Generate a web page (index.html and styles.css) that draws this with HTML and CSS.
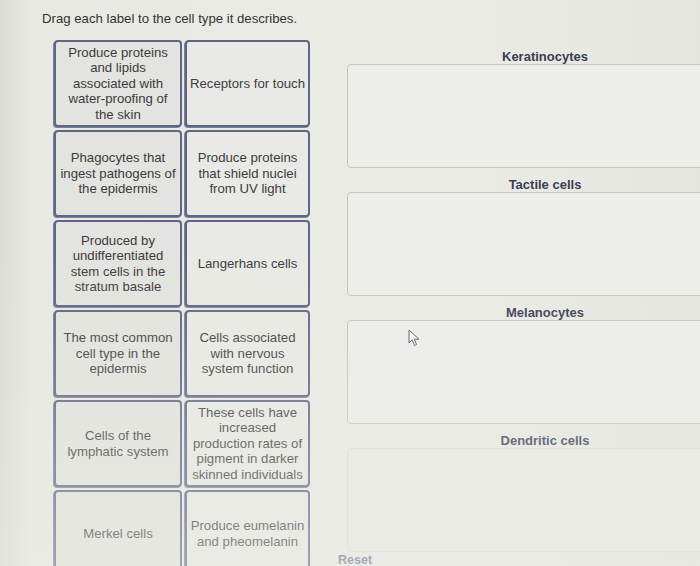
FILE: index.html
```html
<!DOCTYPE html>
<html lang="en">
<head>
  <meta charset="UTF-8">
  <meta name="viewport" content="width=device-width, initial-scale=1.0">
  <title>Cell Types - Labeling</title>
  <link rel="stylesheet" href="styles.css">
</head>
<body>
  <div class="page">
    <p class="prompt">Drag each label to the cell type it describes.</p>

    <div class="activity">
      <div class="label-bank">
        <div class="tile">Produce proteins and lipids associated with water-proofing of the skin</div>
        <div class="tile">Receptors for touch</div>
        <div class="tile">Phagocytes that ingest pathogens of the epidermis</div>
        <div class="tile">Produce proteins that shield nuclei from UV light</div>
        <div class="tile">Produced by undifferentiated stem cells in the stratum basale</div>
        <div class="tile">Langerhans cells</div>
        <div class="tile">The most common cell type in the epidermis</div>
        <div class="tile">Cells associated with nervous system function</div>
        <div class="tile">Cells of the lymphatic system</div>
        <div class="tile">These cells have increased production rates of pigment in darker skinned individuals</div>
        <div class="tile">Merkel cells</div>
        <div class="tile">Produce eumelanin and pheomelanin</div>
      </div>

      <div class="targets">
        <div class="target">
          <div class="target-title">Keratinocytes</div>
          <div class="drop-zone"></div>
        </div>
        <div class="target">
          <div class="target-title">Tactile cells</div>
          <div class="drop-zone"></div>
        </div>
        <div class="target">
          <div class="target-title">Melanocytes</div>
          <div class="drop-zone"></div>
        </div>
        <div class="target">
          <div class="target-title">Dendritic cells</div>
          <div class="drop-zone faint"></div>
        </div>
        <button class="reset" type="button">Reset</button>
      </div>
    </div>

    <!-- mouse pointer resting over the Melanocytes box -->
    <svg class="pointer" width="13" height="18" viewBox="0 0 13 18">
      <path d="M1 1 L1 14 L4.2 11 L6.6 16.5 L8.6 15.6 L6.3 10.2 L11 10.2 Z" fill="#f4f4f0" stroke="#55596e" stroke-width="1" stroke-linejoin="round"/>
    </svg>
  </div>
</body>
</html>
```

FILE: styles.css
```css
html, body {
  margin: 0;
  height: 100%;
  overflow: hidden;
}
body {
  font-family: "Liberation Sans", Arial, sans-serif;
  background-color: #ebebe5;
  background-image: linear-gradient(90deg, #dcdcd6 0px, #e9e9e3 30px, #ecece6 60%, #e6e6e0 100%);
  color: #333;
}
.page {
  position: relative;
  height: 100%;
  padding: 11px 0 0 42px;
  box-sizing: border-box;
}
/* light wash over the lower half, the way the screen fades out */
.page::after {
  content: "";
  position: absolute;
  inset: 0;
  background: linear-gradient(180deg, rgba(236, 236, 230, 0) 45%, rgba(236, 236, 230, 0.45) 100%);
  pointer-events: none;
}
.prompt {
  margin: 0;
  font-size: 13.2px;
  line-height: 15px;
  color: #333;
}
.activity {
  display: flex;
  align-items: flex-start;
  margin-top: 14px;
}
.label-bank {
  display: grid;
  grid-template-columns: 128px 125px;
  grid-auto-rows: 87px;
  gap: 3px;
  margin-left: 12px;
}
.tile {
  display: flex;
  align-items: center;
  justify-content: center;
  text-align: center;
  padding: 0 2px;
  font-size: 13.2px;
  line-height: 15.5px;
  color: #3c3c3c;
  background-color: #e3e3df;
  border: 2px solid #5f6584;
  border-radius: 4px;
  box-shadow: -1px 1px 0 #7d829c;
  box-sizing: border-box;
}
.tile:nth-child(even) {
  background-color: #e9e9e5;
}
.targets {
  display: flex;
  flex-direction: column;
  gap: 9px;
  margin-left: 37px;
  margin-top: 9px;
  width: 396px;
  flex-shrink: 0;
}
.target-title {
  text-align: center;
  font-weight: bold;
  font-size: 13px;
  line-height: 15px;
  color: #3a3d52;
}
.drop-zone {
  height: 102px;
  border: 1px solid #c7c7c2;
  border-radius: 4px;
  background-color: #ededea;
}
.drop-zone.faint {
  border-color: #dcdcd7;
  background-color: #eaeae5;
}
.reset {
  align-self: flex-start;
  margin: -8px 0 0 -9px;
  padding: 0;
  border: none;
  background: none;
  font-family: "Liberation Sans", Arial, sans-serif;
  font-weight: bold;
  font-size: 12.5px;
  line-height: 15px;
  color: #6f7494;
  cursor: pointer;
}
.pointer {
  position: absolute;
  left: 408px;
  top: 329px;
}
```
